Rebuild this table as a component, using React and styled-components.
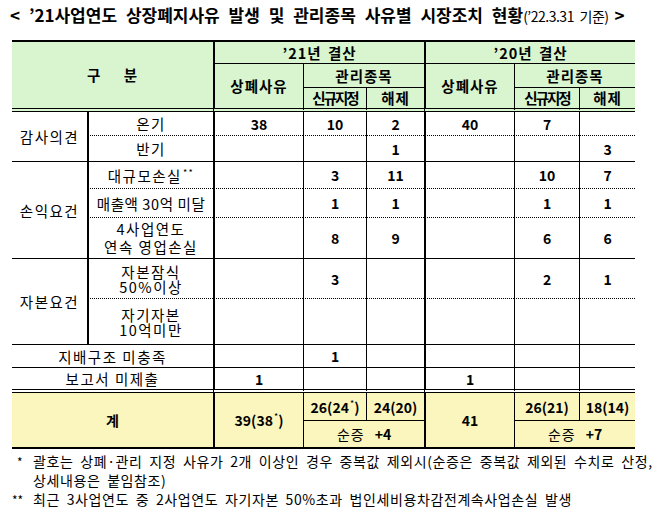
import React from "react";
import styled, { createGlobalStyle, css } from "styled-components";

const GlobalStyle = createGlobalStyle`
  html, body {
    margin: 0;
    padding: 0;
    background: #fff;
  }
  body {
    font-family: "Noto Sans CJK KR", "Noto Sans", sans-serif;
    color: #000;
    overflow: hidden;
  }
`;

const lines = {
  none: "none",
  dotted: "1px dotted #000",
  solid: "1px solid #000",
  double: "4px double #000",
  heavy: "2px solid #000",
};

const tones = { plain: "#ffffff", head: "#d8f5cf", sum: "#fbf6bd" };

const edges = {
  none: "none",
  thin: "1px solid #000",
  thick: "2px solid #000",
};

const cellBase = css`
  padding: 0;
  text-align: center;
  vertical-align: middle;
  white-space: nowrap;
  border-left: ${({ $left = "thin" }) => edges[$left]};
  border-bottom: ${({ $bottom = "solid" }) => lines[$bottom]};
  background: ${({ $tone = "plain" }) => tones[$tone]};
`;

const Page = styled.div`
  width: 658px;
  height: 515px;
  box-sizing: border-box;
  padding-top: 4px;
`;

const Title = styled.h1`
  margin: 0 0 0 10px;
  height: 36px;
  font-size: 17px;
  line-height: 22px;
  font-weight: 700;
  letter-spacing: 0;
  word-spacing: 5px;
  white-space: nowrap;
`;

const TitleNote = styled.span`
  font-size: 14px;
  font-weight: 400;
  letter-spacing: -0.5px;
  word-spacing: 3px;
  margin-right: 6px;
`;

const Table = styled.table`
  margin-left: 12px;
  width: 623px;
  table-layout: fixed;
  border-collapse: separate;
  border-spacing: 0;
  border-top: 2px solid #000;
`;

const Row = styled.tr`
  height: ${({ $h }) => $h}px;
`;

const HeadCell = styled.th`
  ${cellBase};
  font-size: 14.5px;
  line-height: 16px;
  font-weight: 700;
  letter-spacing: ${({ $squeeze }) => ($squeeze ? "-2px" : "1px")};
  word-spacing: ${({ $wide }) => ($wide ? "18px" : "2px")};
`;

const Label = styled.td`
  ${cellBase};
  font-size: 14.5px;
  line-height: ${({ $pitch = 17 }) => $pitch}px;
  letter-spacing: ${({ $tight }) => ($tight ? "0.6px" : "1.5px")};
`;

const Value = styled.td`
  ${cellBase};
  font-size: 14px;
  line-height: 16px;
  font-weight: 700;
`;

const SumLabel = styled.span`
  font-weight: 400;
  letter-spacing: 1px;
  margin-right: 10px;
`;

const Star = styled.sup`
  font-size: 9px;
  line-height: 0;
  vertical-align: 6px;
  margin-left: 1px;
  font-weight: 400;
`;

const Notes = styled.div`
  margin-top: 3px;
  font-size: 14px;
  line-height: 19px;
  letter-spacing: 0.6px;
  word-spacing: 3px;
  white-space: nowrap;
`;

const Note = styled.div`
  display: flex;
`;

const Mark = styled.span`
  width: 33px;
  flex: none;
  box-sizing: border-box;
  padding-left: ${({ $double }) => ($double ? "12px" : "17px")};
  letter-spacing: 0;
  font-size: 12px;
`;

const widths = [75, 126, 90, 63, 58, 90, 65, 56];

export default function App() {
  return (
    <Page>
      <GlobalStyle />
      <Title>
        &lt; ’21사업연도 상장폐지사유 발생 및 관리종목 사유별 시장조치 현황
        <TitleNote>(’22.3.31 기준)</TitleNote>&gt;
      </Title>

      <Table>
        <colgroup>
          {widths.map((w, i) => (
            <col key={i} style={{ width: w }} />
          ))}
        </colgroup>
        <thead>
          <Row $h={22}>
            <HeadCell colSpan={2} rowSpan={3} $left="none" $tone="head" $bottom="double" $wide>
              구 분
            </HeadCell>
            <HeadCell colSpan={3} $left="thick" $tone="head">’21년 결산</HeadCell>
            <HeadCell colSpan={3} $left="thick" $tone="head">’20년 결산</HeadCell>
          </Row>
          <Row $h={24}>
            <HeadCell rowSpan={2} $left="thick" $tone="head" $bottom="double">상폐사유</HeadCell>
            <HeadCell colSpan={2} $tone="head">관리종목</HeadCell>
            <HeadCell rowSpan={2} $left="thick" $tone="head" $bottom="double">상폐사유</HeadCell>
            <HeadCell colSpan={2} $tone="head">관리종목</HeadCell>
          </Row>
          <Row $h={24}>
            <HeadCell $tone="head" $bottom="double" $squeeze>신규지정</HeadCell>
            <HeadCell $tone="head" $bottom="double">해제</HeadCell>
            <HeadCell $tone="head" $bottom="double" $squeeze>신규지정</HeadCell>
            <HeadCell $tone="head" $bottom="double">해제</HeadCell>
          </Row>
        </thead>
        <tbody>
          <Row $h={24}>
            <Label rowSpan={2} $left="none">감사의견</Label>
            <Label $left="thick" $bottom="dotted">온기</Label>
            <Value $left="thick" $bottom="dotted">38</Value>
            <Value $bottom="dotted">10</Value>
            <Value $bottom="dotted">2</Value>
            <Value $left="thick" $bottom="dotted">40</Value>
            <Value $bottom="dotted">7</Value>
            <Value $bottom="dotted" />
          </Row>
          <Row $h={26}>
            <Label $left="thick">반기</Label>
            <Value $left="thick" />
            <Value />
            <Value>1</Value>
            <Value $left="thick" />
            <Value />
            <Value>3</Value>
          </Row>

          <Row $h={27}>
            <Label rowSpan={3} $left="none">손익요건</Label>
            <Label $left="thick" $bottom="dotted">
              대규모손실<Star>**</Star>
            </Label>
            <Value $left="thick" $bottom="dotted" />
            <Value $bottom="dotted">3</Value>
            <Value $bottom="dotted">11</Value>
            <Value $left="thick" $bottom="dotted" />
            <Value $bottom="dotted">10</Value>
            <Value $bottom="dotted">7</Value>
          </Row>
          <Row $h={29}>
            <Label $left="thick" $bottom="dotted" $tight>매출액 30억 미달</Label>
            <Value $left="thick" $bottom="dotted" />
            <Value $bottom="dotted">1</Value>
            <Value $bottom="dotted">1</Value>
            <Value $left="thick" $bottom="dotted" />
            <Value $bottom="dotted">1</Value>
            <Value $bottom="dotted">1</Value>
          </Row>
          <Row $h={41}>
            <Label $left="thick" $pitch={18}>
              4사업연도
              <br />
              연속 영업손실
            </Label>
            <Value $left="thick" />
            <Value>8</Value>
            <Value>9</Value>
            <Value $left="thick" />
            <Value>6</Value>
            <Value>6</Value>
          </Row>

          <Row $h={40}>
            <Label rowSpan={2} $left="none">자본요건</Label>
            <Label $left="thick" $bottom="dotted" $pitch={15}>
              자본잠식
              <br />
              50%이상
            </Label>
            <Value $left="thick" $bottom="dotted" />
            <Value $bottom="dotted">3</Value>
            <Value $bottom="dotted" />
            <Value $left="thick" $bottom="dotted" />
            <Value $bottom="dotted">2</Value>
            <Value $bottom="dotted">1</Value>
          </Row>
          <Row $h={46}>
            <Label $left="thick" $pitch={15}>
              자기자본
              <br />
              10억미만
            </Label>
            <Value $left="thick" />
            <Value />
            <Value />
            <Value $left="thick" />
            <Value />
            <Value />
          </Row>

          <Row $h={23}>
            <Label colSpan={2} $left="none">지배구조 미충족</Label>
            <Value $left="thick" />
            <Value>1</Value>
            <Value />
            <Value $left="thick" />
            <Value />
            <Value />
          </Row>
          <Row $h={25}>
            <Label colSpan={2} $left="none" $bottom="double">보고서 미제출</Label>
            <Value $left="thick" $bottom="double">1</Value>
            <Value $bottom="double" />
            <Value $bottom="double" />
            <Value $left="thick" $bottom="double">1</Value>
            <Value $bottom="double" />
            <Value $bottom="double" />
          </Row>

          <Row $h={28}>
            <Value colSpan={2} rowSpan={2} $left="none" $tone="sum" $bottom="heavy">
              계
            </Value>
            <Value rowSpan={2} $left="thick" $tone="sum" $bottom="heavy">
              39(38<Star>*</Star>)
            </Value>
            <Value $tone="sum">
              26(24<Star>*</Star>)
            </Value>
            <Value $tone="sum">24(20)</Value>
            <Value rowSpan={2} $left="thick" $tone="sum" $bottom="heavy">
              41
            </Value>
            <Value $tone="sum">26(21)</Value>
            <Value $tone="sum">18(14)</Value>
          </Row>
          <Row $h={28}>
            <Value colSpan={2} $tone="sum" $bottom="heavy">
              <SumLabel>순증</SumLabel>+4
            </Value>
            <Value colSpan={2} $tone="sum" $bottom="heavy">
              <SumLabel>순증</SumLabel>+7
            </Value>
          </Row>
        </tbody>
      </Table>

      <Notes>
        <Note>
          <Mark>*</Mark>
          <span>괄호는 상폐·관리 지정 사유가 2개 이상인 경우 중복값 제외시(순증은 중복값 제외된 수치로 산정,</span>
        </Note>
        <Note>
          <Mark />
          <span>상세내용은 붙임참조)</span>
        </Note>
        <Note>
          <Mark $double>**</Mark>
          <span>최근 3사업연도 중 2사업연도 자기자본 50%초과 법인세비용차감전계속사업손실 발생</span>
        </Note>
      </Notes>
    </Page>
  );
}
